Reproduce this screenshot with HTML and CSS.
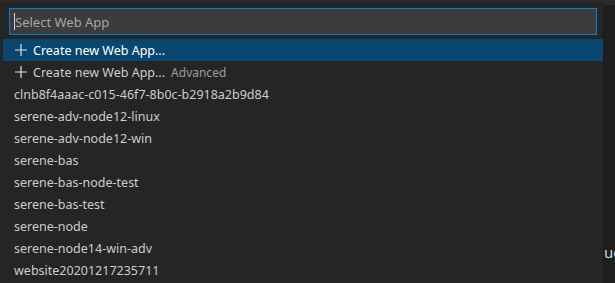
FILE: index.html
```html
<!DOCTYPE html>
<html lang="en">
<head>
    <meta charset="UTF-8">
    <title>Select Web App</title>
    <link rel="stylesheet" href="styles.css">
</head>
<body>

<div class="workbench">
    <div class="quick-pick">
        <div class="input-wrap">
            <div class="input-box">
                <span class="caret"></span>
                <span class="placeholder">Select Web App</span>
            </div>
        </div>
        <ul class="list">
            <li class="item selected">
                <svg class="plus" width="14" height="14" viewBox="0 0 14 14"><path d="M7 1v12M1 7h12" stroke="currentColor" stroke-width="1.2" fill="none"/></svg>
                <span>Create new Web App...</span>
            </li>
            <li class="item">
                <svg class="plus" width="14" height="14" viewBox="0 0 14 14"><path d="M7 1v12M1 7h12" stroke="currentColor" stroke-width="1.2" fill="none"/></svg>
                <span>Create new Web App...</span>
                <span class="desc">Advanced</span>
            </li>
            <li class="item">clnb8f4aaac-c015-46f7-8b0c-b2918a2b9d84</li>
            <li class="item">serene-adv-node12-linux</li>
            <li class="item">serene-adv-node12-win</li>
            <li class="item">serene-bas</li>
            <li class="item">serene-bas-node-test</li>
            <li class="item">serene-bas-test</li>
            <li class="item">serene-node</li>
            <li class="item">serene-node14-win-adv</li>
            <li class="item">website20201217235711</li>
        </ul>
    </div>
    <div class="editor-edge">
        <span class="peek">ug</span>
    </div>
</div>

</body>
</html>
```

FILE: styles.css
```css
body {
    margin: 0;
    background-color: #1e1e1e;
    font-family: "Noto Sans", "Open Sans", sans-serif;
    font-size: 12.5px;
    color: #cccccc;
    overflow: hidden;
}
.workbench {
    display: flex;
    height: 283px;
    border-top: 5px solid #2d2d2d;
}
.quick-pick {
    flex-shrink: 0;
    box-sizing: border-box;
    width: 603px;
    padding-left: 3px;
    background-color: #252526;
    box-shadow: 0 0 8px rgba(0, 0, 0, 0.6);
}
.input-wrap {
    padding: 3px 6px 4px 6px;
}
.input-box {
    display: flex;
    align-items: center;
    height: 25px;
    border: 1px solid #007fd4;
    background-color: #3c3c3c;
    padding-left: 4px;
}
.caret {
    width: 1px;
    height: 17px;
    background-color: #d4d4d4;
}
.placeholder {
    color: #a6a6a6;
    font-size: 13px;
}
.list {
    list-style: none;
    margin: 0;
    padding: 0;
}
.item {
    display: flex;
    align-items: center;
    height: 22px;
    padding-left: 11px;
    white-space: nowrap;
}
.item.selected {
    background-color: #094771;
    color: #ffffff;
}
.plus {
    margin-right: 5px;
    color: #e0e0e0;
}
.desc {
    margin-left: 6px;
    font-size: 12px;
    opacity: 0.7;
}
.editor-edge {
    flex: 1;
    display: flex;
    align-items: flex-end;
    padding-bottom: 26px;
    border-left: 1px solid #1a1a1a;
    background-color: #1e1e1e;
}
.peek {
    font-size: 15px;
    color: #d4d4d4;
}
```
